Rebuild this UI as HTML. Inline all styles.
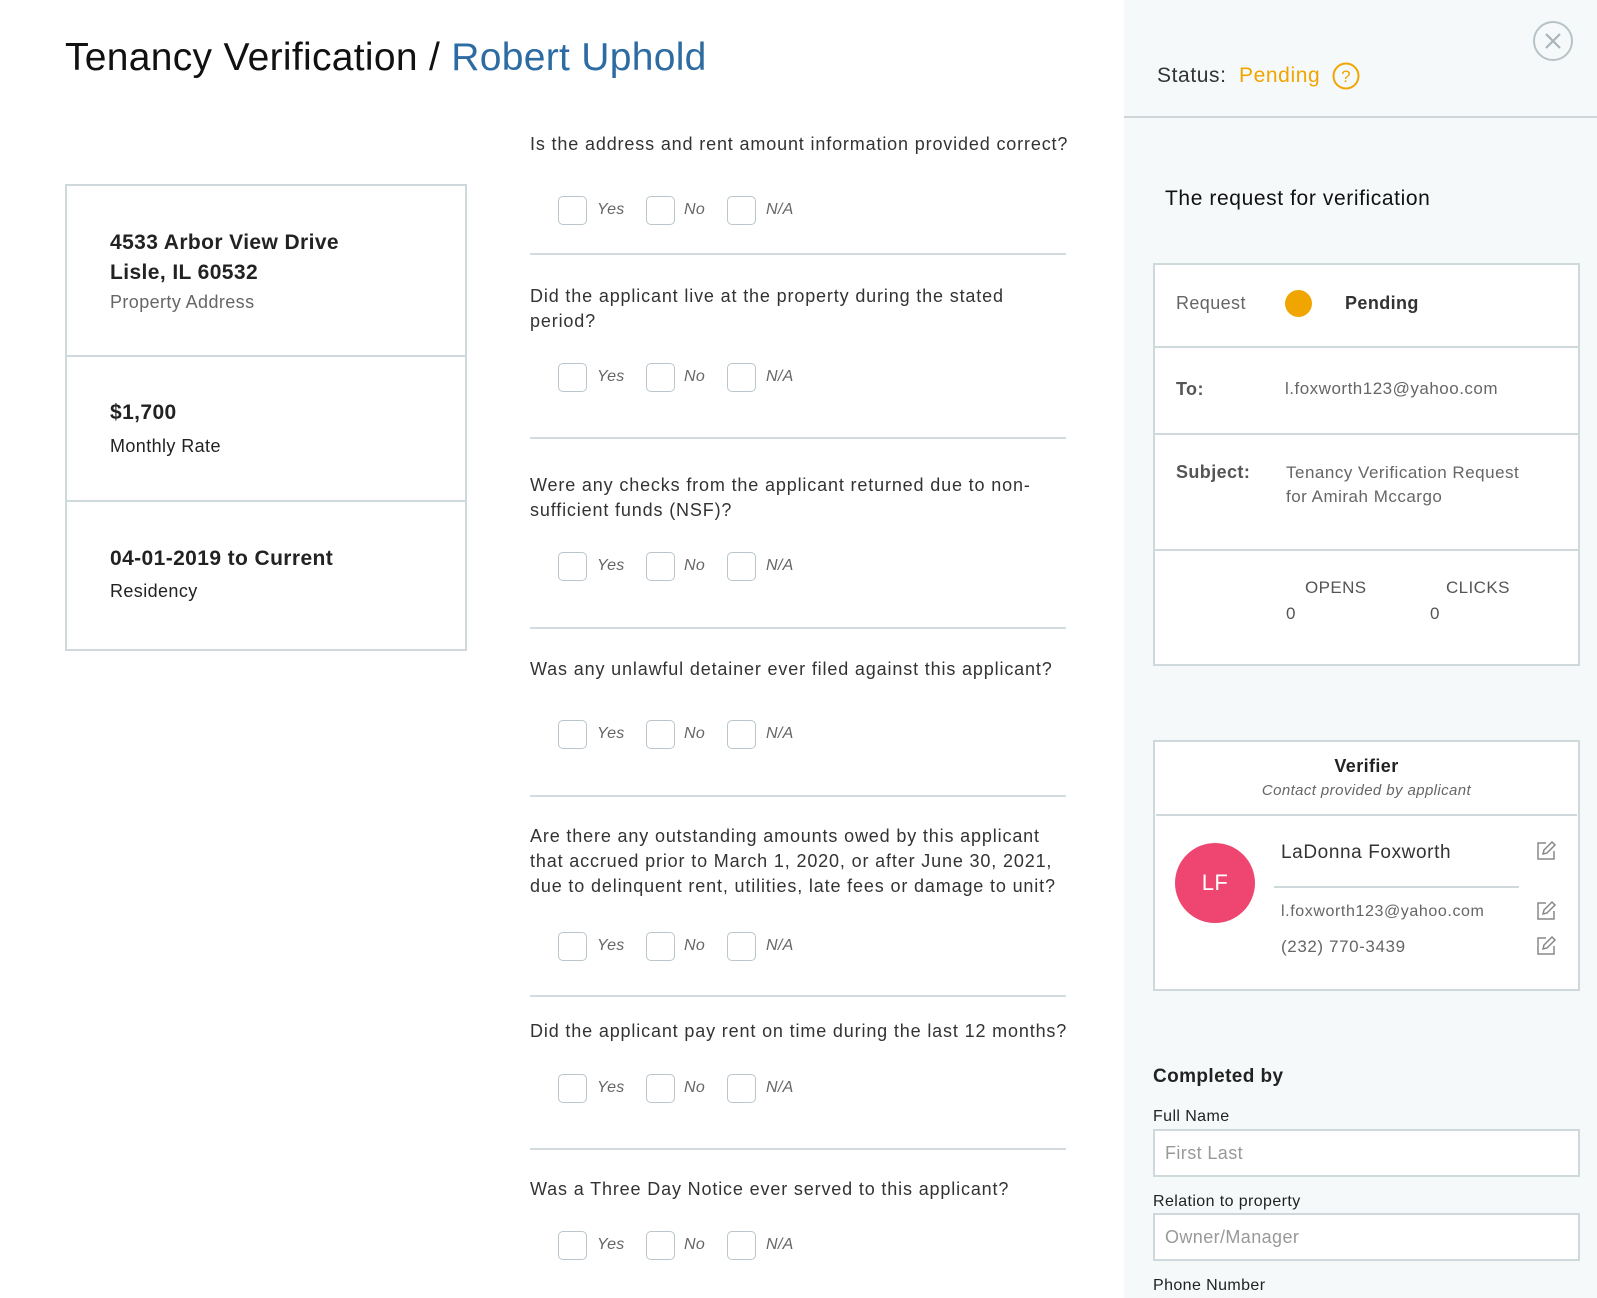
<!DOCTYPE html>
<html><head><meta charset="utf-8"><style>
*{margin:0;padding:0;box-sizing:border-box}
body{width:1597px;height:1298px;overflow:hidden;background:#fff;font-family:"Liberation Sans",sans-serif;color:#222;position:relative;letter-spacing:0.4px}
.a{position:absolute;white-space:nowrap}
.q{position:absolute;left:530px;font-size:18px;color:#333;line-height:25px;letter-spacing:0.85px}
.hr{position:absolute;left:530px;width:536px;height:2px;background:#d3dbde}
.cb{position:absolute;width:29px;height:29px;border:1.5px solid #b9c6cb;border-radius:5px;background:#fff}
.lb{position:absolute;font-size:16px;font-style:italic;color:#666;letter-spacing:0.3px}
.box{position:absolute;border:2px solid #cfd8db;background:#fff}
.line{position:absolute;height:2px;background:#cfd8db}
.gray{color:#666}
.inp{position:absolute;left:1153px;width:427px;height:48px;border:2px solid #cfd8db;background:#fff;font-size:18px;color:#999;padding:12px 0 0 10px}
</style></head><body>
<div class="a" style="left:65px;top:36px;font-size:39px;color:#111;letter-spacing:0.3px">Tenancy Verification / <span style="color:#2d6ba3">Robert Uphold</span></div>

<div class="box" style="left:65px;top:184px;width:402px;height:467px"></div>
<div class="line" style="left:65px;top:355px;width:402px"></div>
<div class="line" style="left:65px;top:500px;width:402px"></div>
<div class="a" style="left:110px;top:228px;font-size:21px;font-weight:bold;line-height:30px">4533 Arbor View Drive<br>Lisle, IL 60532</div>
<div class="a gray" style="left:110px;top:292px;font-size:18px">Property Address</div>
<div class="a" style="left:110px;top:401px;font-size:21px;font-weight:bold">$1,700</div>
<div class="a" style="left:110px;top:436px;font-size:18px">Monthly Rate</div>
<div class="a" style="left:110px;top:547px;font-size:21px;font-weight:bold">04-01-2019 to Current</div>
<div class="a" style="left:110px;top:581px;font-size:18px">Residency</div>

<div class="q" style="top:132px">Is the address and rent amount information provided correct?</div>
<div class="hr" style="top:253px"></div>
<div class="q" style="top:284px">Did the applicant live at the property during the stated<br>period?</div>
<div class="hr" style="top:437px"></div>
<div class="q" style="top:473px">Were any checks from the applicant returned due to non-<br>sufficient funds (NSF)?</div>
<div class="hr" style="top:627px"></div>
<div class="q" style="top:657px">Was any unlawful detainer ever filed against this applicant?</div>
<div class="hr" style="top:795px"></div>
<div class="q" style="top:824px">Are there any outstanding amounts owed by this applicant<br>that accrued prior to March 1, 2020, or after June 30, 2021,<br>due to delinquent rent, utilities, late fees or damage to unit?</div>
<div class="hr" style="top:995px"></div>
<div class="q" style="top:1019px">Did the applicant pay rent on time during the last 12 months?</div>
<div class="hr" style="top:1148px"></div>
<div class="q" style="top:1177px">Was a Three Day Notice ever served to this applicant?</div>

<div id="cbs"></div>
<script>
var ys=[210,377,566,734,946,1088,1245],h='';
ys.forEach(function(y){
h+='<div class="cb" style="left:558px;top:'+(y-14)+'px"></div><div class="lb" style="left:597px;top:'+(y-9)+'px">Yes</div>';
h+='<div class="cb" style="left:646px;top:'+(y-14)+'px"></div><div class="lb" style="left:684px;top:'+(y-9)+'px">No</div>';
h+='<div class="cb" style="left:727px;top:'+(y-14)+'px"></div><div class="lb" style="left:766px;top:'+(y-9)+'px">N/A</div>';
});
document.getElementById('cbs').innerHTML=h;
</script>

<div class="a" style="left:1124px;top:0;width:473px;height:1298px;background:#f6f9fa"></div>
<div class="a" style="left:1124px;top:116px;width:473px;height:2px;background:#cfd6d9"></div>
<svg class="a" style="left:1532px;top:20px" width="42" height="42" viewBox="0 0 42 42"><circle cx="21" cy="21" r="19" fill="none" stroke="#b8c3c7" stroke-width="2"/><path d="M14 14L28 28M28 14L14 28" stroke="#a9b5b9" stroke-width="2.2"/></svg>
<div class="a" style="left:1157px;top:64px;font-size:21px;color:#333;letter-spacing:0.6px">Status:</div>
<div class="a" style="left:1239px;top:64px;font-size:21px;color:#f0a500;letter-spacing:0.6px">Pending</div>
<svg class="a" style="left:1332px;top:62px" width="28" height="28" viewBox="0 0 28 28"><circle cx="14" cy="14" r="12.5" fill="none" stroke="#f0a500" stroke-width="2"/><text x="14" y="20" text-anchor="middle" font-size="17" fill="#f0a500" font-family="Liberation Sans">?</text></svg>
<div class="a" style="left:1165px;top:187px;font-size:21px;color:#111;letter-spacing:0.6px">The request for verification</div>

<div class="box" style="left:1153px;top:263px;width:427px;height:403px"></div>
<div class="line" style="left:1153px;top:346px;width:427px"></div>
<div class="line" style="left:1153px;top:433px;width:427px"></div>
<div class="line" style="left:1153px;top:549px;width:427px"></div>
<div class="a gray" style="left:1176px;top:293px;font-size:18px">Request</div>
<div class="a" style="left:1285px;top:290px;width:27px;height:27px;border-radius:50%;background:#f0a500"></div>
<div class="a" style="left:1345px;top:293px;font-size:18px;font-weight:bold;color:#333">Pending</div>
<div class="a" style="left:1176px;top:379px;font-size:18px;font-weight:bold;color:#555">To:</div>
<div class="a gray" style="left:1285px;top:379px;font-size:17px;letter-spacing:0.5px">l.foxworth123@yahoo.com</div>
<div class="a" style="left:1176px;top:462px;font-size:18px;font-weight:bold;color:#555">Subject:</div>
<div class="a gray" style="left:1286px;top:461px;font-size:17px;line-height:24px;letter-spacing:0.5px">Tenancy Verification Request<br>for Amirah Mccargo</div>
<div class="a" style="left:1305px;top:578px;font-size:17px;color:#555">OPENS</div>
<div class="a" style="left:1446px;top:578px;font-size:17px;color:#555">CLICKS</div>
<div class="a" style="left:1286px;top:604px;font-size:17px;color:#555">0</div>
<div class="a" style="left:1430px;top:604px;font-size:17px;color:#555">0</div>

<div class="box" style="left:1153px;top:740px;width:427px;height:251px"></div>
<div class="a" style="left:1153px;top:756px;width:427px;text-align:center;font-size:18px;font-weight:bold">Verifier</div>
<div class="a" style="left:1153px;top:782px;width:427px;text-align:center;font-size:15px;font-style:italic;color:#666">Contact provided by applicant</div>
<div class="line" style="left:1156px;top:814px;width:421px"></div>
<div class="a" style="left:1175px;top:843px;width:80px;height:80px;border-radius:50%;background:#ee4670;color:#fff;font-size:22px;text-align:center;line-height:80px">LF</div>
<div class="a" style="left:1281px;top:842px;font-size:19px;color:#333;letter-spacing:0.6px">LaDonna Foxworth</div>
<div class="line" style="left:1274px;top:886px;width:245px"></div>
<div class="a gray" style="left:1281px;top:903px;font-size:16px;letter-spacing:0.6px">l.foxworth123@yahoo.com</div>
<div class="a gray" style="left:1281px;top:937px;font-size:17px;letter-spacing:0.6px">(232) 770-3439</div>
<svg class="a" style="left:1535px;top:840px" width="22" height="22" viewBox="0 0 22 22"><path d="M11 3H3v16h16v-8" fill="none" stroke="#888" stroke-width="1.5"/><path d="M8 14l1-4 8-8 3 3-8 8z" fill="none" stroke="#888" stroke-width="1.5"/></svg>
<svg class="a" style="left:1535px;top:900px" width="22" height="22" viewBox="0 0 22 22"><path d="M11 3H3v16h16v-8" fill="none" stroke="#888" stroke-width="1.5"/><path d="M8 14l1-4 8-8 3 3-8 8z" fill="none" stroke="#888" stroke-width="1.5"/></svg>
<svg class="a" style="left:1535px;top:935px" width="22" height="22" viewBox="0 0 22 22"><path d="M11 3H3v16h16v-8" fill="none" stroke="#888" stroke-width="1.5"/><path d="M8 14l1-4 8-8 3 3-8 8z" fill="none" stroke="#888" stroke-width="1.5"/></svg>

<div class="a" style="left:1153px;top:1066px;font-size:19px;font-weight:bold">Completed by</div>
<div class="a" style="left:1153px;top:1108px;font-size:16px">Full Name</div>
<div class="inp" style="top:1129px">First Last</div>
<div class="a" style="left:1153px;top:1193px;font-size:16px">Relation to property</div>
<div class="inp" style="top:1213px">Owner/Manager</div>
<div class="a" style="left:1153px;top:1277px;font-size:16px">Phone Number</div>
</body></html>
